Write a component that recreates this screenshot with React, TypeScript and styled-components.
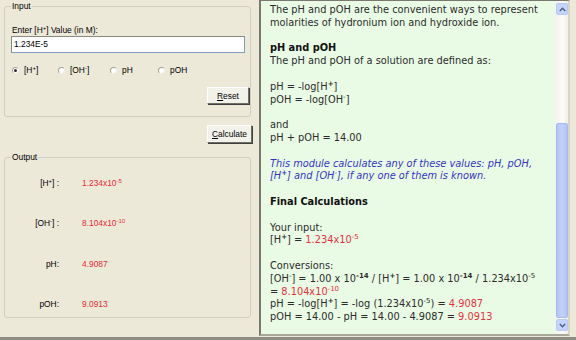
import React from 'react';
import styled, { createGlobalStyle } from 'styled-components';

const Global = createGlobalStyle`
  html, body { margin: 0; padding: 0; background: #ece9d8; }
  #root { width: 576px; height: 340px; overflow: hidden; }
`;

const Frame = styled.div`
  width: 576px;
  height: 340px;
  display: flex;
  flex-direction: column;
  background: #ece9d8;
`;

const Main = styled.div`
  display: flex;
  height: 337px;
`;

const BottomBar = styled.div`
  height: 3px;
  background: #8f8d81;
`;

const LeftPanel = styled.div`
  width: 259px;
  flex: none;
  box-sizing: border-box;
  padding: 1px 7px 0 4px;
  display: flex;
  flex-direction: column;
  font-family: "Liberation Sans", Arial, sans-serif;
  font-size: 8.4px;
  color: #000;
`;

const Group = styled.fieldset<{ $h: number; $top?: number }>`
  margin: ${(p) => p.$top ?? 0}px 0 0 0;
  width: 247px;
  height: ${(p) => p.$h}px;
  box-sizing: border-box;
  border: 1px solid #d0cfbf;
  border-radius: 3px;
  padding: 0 1px 0 7px;
  display: flex;
  flex-direction: column;
  min-width: 0;
`;

const Legend = styled.legend`
  padding: 0 1px;
  margin-left: -1px;
  line-height: 10px;
  color: #000;
`;

const FieldLabel = styled.div`
  margin-top: 14px;
  line-height: 10px;
`;

const TextBox = styled.div`
  margin: 1px 0 0 -1px;
  width: 234px;
  height: 17px;
  box-sizing: border-box;
  background: #fff;
  border: 1px solid #7f9db9;
  border-top-color: #8a8a80;
  border-left-color: #8a8a80;
  padding: 0 0 0 2px;
  line-height: 15px;
  font-size: 8.4px;
  color: #000;
`;

const RadioRow = styled.div`
  margin-top: 12px;
  display: grid;
  grid-template-columns: 46px 52px 48px auto;
  align-items: center;
  height: 10px;
`;

const RadioItem = styled.label`
  display: flex;
  align-items: center;
  gap: 5px;
  line-height: 10px;
`;

const RadioCircle = styled.span<{ $checked?: boolean }>`
  width: 7px;
  height: 7px;
  flex: none;
  border-radius: 50%;
  box-sizing: border-box;
  background: #fff;
  border: 1px solid #a5a49a;
  border-right-color: #eeeee8;
  border-bottom-color: #eeeee8;
  display: flex;
  align-items: center;
  justify-content: center;
  &::after {
    content: "";
    width: 3px;
    height: 3px;
    border-radius: 50%;
    background: ${(p) => (p.$checked ? '#2a2a2a' : 'transparent')};
  }
`;

const ButtonRow = styled.div<{ $top: number }>`
  display: flex;
  justify-content: flex-end;
  margin-top: ${(p) => p.$top}px;
`;

const Button = styled.div<{ $w: number; $h: number }>`
  width: ${(p) => p.$w}px;
  height: ${(p) => p.$h}px;
  box-sizing: border-box;
  background: #f2f1ea;
  border: 1px solid #fff;
  border-right-color: #716f64;
  border-bottom-color: #716f64;
  box-shadow: 1px 1px 0 #404040;
  display: flex;
  align-items: center;
  justify-content: center;
  font-size: 8.4px;
  color: #000;
  u { text-decoration: underline; }
`;

const OutputGrid = styled.div`
  margin-top: 16px;
  margin-left: -7px;
  display: grid;
  grid-template-columns: 54px auto;
  column-gap: 23px;
  grid-auto-rows: 40.4px;
`;

const OutLabel = styled.div`
  text-align: right;
  line-height: 10px;
  color: #000;
`;

const OutValue = styled.div`
  line-height: 10px;
  color: #e32a3a;
`;

const SmallSup = styled.sup`
  font-size: 6px;
  line-height: 0;
  vertical-align: 3px;
`;

const RightWrap = styled.div`
  flex: 1;
  display: flex;
  padding: 0 6px 1px 0;
`;

const Pane = styled.div`
  flex: 1;
  display: flex;
  box-sizing: border-box;
  border-left: 2px solid #7a786e;
  border-top: 1px solid #7a786e;
  border-right: 2px solid #d8d5c6;
  border-bottom: 2px solid #a9a799;
  background: #e9fbe5;
`;

const TextCol = styled.div`
  flex: 1;
  padding: 3px 0 0 9px;
  font-family: "DejaVu Sans", Verdana, sans-serif;
  font-size: 9.8px;
  line-height: 12.8px;
  color: #2b2b2b;
  white-space: nowrap;
  overflow: hidden;
`;

const Para = styled.div`
  margin-bottom: 12.8px;
`;

const Line = styled.div``;

const Heading = styled.div`
  font-weight: bold;
  color: #111;
`;

const Note = styled.div`
  font-style: italic;
  color: #3434c4;
`;

const Red = styled.span`
  color: #e3323e;
`;

const Sup = styled.sup<{ $bold?: boolean }>`
  font-size: 7px;
  line-height: 0;
  vertical-align: 4px;
  font-weight: ${(p) => (p.$bold ? 'bold' : 'normal')};
`;

const ScrollBar = styled.div`
  width: 13px;
  flex: none;
  display: flex;
  flex-direction: column;
  padding: 2px 0 3px 0;
  background: linear-gradient(to right, #f3f2ec, #fbfbf8 60%, #eeede6);
`;

const ArrowBtn = styled.div`
  width: 12px;
  height: 12px;
  box-sizing: border-box;
  margin-left: 1px;
  border-radius: 2px;
  background: #c5d4fb;
  border: 1px solid #b7c8f5;
  display: flex;
  align-items: center;
  justify-content: center;
`;

const Track = styled.div`
  flex: 1;
  display: flex;
  flex-direction: column;
  padding: 108px 0 1px 1px;
`;

const Thumb = styled.div`
  flex: 1;
  width: 12px;
  box-sizing: border-box;
  border-radius: 2px;
  background: linear-gradient(to right, #b4c6f6, #c3d1fb 50%, #b3c4f4);
  border: 1px solid #a6b9ee;
`;

const Chevron = ({ up }: { up?: boolean }) => (
  <svg width="7" height="5" viewBox="0 0 7 5">
    <path
      d={up ? 'M0.8 4 L3.5 1.3 L6.2 4' : 'M0.8 1 L3.5 3.7 L6.2 1'}
      fill="none"
      stroke="#4d6185"
      strokeWidth="1.5"
    />
  </svg>
);

export default function App() {
  return (
    <Frame>
      <Global />
      <Main>
        <LeftPanel>
          <Group $h={116}>
            <Legend>Input</Legend>
            <FieldLabel>
              Enter [H<SmallSup>+</SmallSup>] Value (in M):
            </FieldLabel>
            <TextBox>1.234E-5</TextBox>
            <RadioRow>
              <RadioItem>
                <RadioCircle $checked />
                <span>
                  [H<SmallSup>+</SmallSup>]
                </span>
              </RadioItem>
              <RadioItem>
                <RadioCircle />
                <span>
                  [OH<SmallSup>-</SmallSup>]
                </span>
              </RadioItem>
              <RadioItem>
                <RadioCircle />
                <span>pH</span>
              </RadioItem>
              <RadioItem>
                <RadioCircle />
                <span>pOH</span>
              </RadioItem>
            </RadioRow>
            <ButtonRow $top={12}>
              <Button $w={42} $h={17}>
                <span>
                  <u>R</u>eset
                </span>
              </Button>
            </ButtonRow>
          </Group>
          <ButtonRow $top={8}>
            <Button $w={45} $h={18}>
              <span>
                <u>C</u>alculate
              </span>
            </Button>
          </ButtonRow>
          <Group $h={166} $top={9}>
            <Legend>Output</Legend>
            <OutputGrid>
              <OutLabel>
                [H<SmallSup>+</SmallSup>] :
              </OutLabel>
              <OutValue>
                1.234x10<SmallSup>-5</SmallSup>
              </OutValue>
              <OutLabel>
                [OH<SmallSup>-</SmallSup>] :
              </OutLabel>
              <OutValue>
                8.104x10<SmallSup>-10</SmallSup>
              </OutValue>
              <OutLabel>pH:</OutLabel>
              <OutValue>4.9087</OutValue>
              <OutLabel>pOH:</OutLabel>
              <OutValue>9.0913</OutValue>
            </OutputGrid>
          </Group>
        </LeftPanel>
        <RightWrap>
          <Pane>
            <TextCol>
              <Para>
                <Line>The pH and pOH are the convenient ways to represent</Line>
                <Line>molarities of hydronium ion and hydroxide ion.</Line>
              </Para>
              <Para>
                <Heading>pH and pOH</Heading>
                <Line>The pH and pOH of a solution are defined as:</Line>
              </Para>
              <Para>
                <Line>
                  pH = -log[H<Sup $bold>+</Sup>]
                </Line>
                <Line>
                  pOH = -log[OH<Sup>-</Sup>]
                </Line>
              </Para>
              <Para>
                <Line>and</Line>
                <Line>pH + pOH = 14.00</Line>
              </Para>
              <Para>
                <Note>This module calculates any of these values: pH, pOH,</Note>
                <Note>
                  [H<Sup $bold>+</Sup>] and [OH<Sup>-</Sup>], if any one of them is known.
                </Note>
              </Para>
              <Para>
                <Heading>Final Calculations</Heading>
              </Para>
              <Para>
                <Line>Your input:</Line>
                <Line>
                  [H<Sup $bold>+</Sup>] = <Red>1.234x10<Sup>-5</Sup></Red>
                </Line>
              </Para>
              <Para>
                <Line>Conversions:</Line>
                <Line>
                  [OH<Sup>-</Sup>] = 1.00 x 10<Sup $bold>-14</Sup> / [H<Sup $bold>+</Sup>] = 1.00 x
                  10<Sup $bold>-14</Sup> / 1.234x10<Sup>-5</Sup>
                </Line>
                <Line>
                  = <Red>8.104x10<Sup>-10</Sup></Red>
                </Line>
                <Line>
                  pH = -log[H<Sup $bold>+</Sup>] = -log (1.234x10<Sup>-5</Sup>) ={' '}
                  <Red>4.9087</Red>
                </Line>
                <Line>
                  pOH = 14.00 - pH = 14.00 - 4.9087 = <Red>9.0913</Red>
                </Line>
              </Para>
            </TextCol>
            <ScrollBar>
              <ArrowBtn>
                <Chevron up />
              </ArrowBtn>
              <Track>
                <Thumb />
              </Track>
              <ArrowBtn>
                <Chevron />
              </ArrowBtn>
            </ScrollBar>
          </Pane>
        </RightWrap>
      </Main>
      <BottomBar />
    </Frame>
  );
}
